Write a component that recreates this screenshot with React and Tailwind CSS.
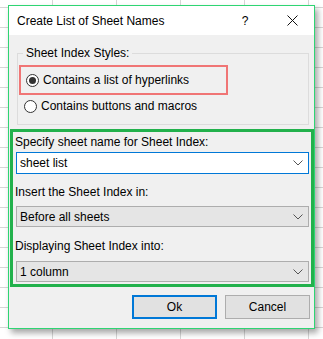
import { useState } from "react";

function Chevron() {
  return (
    <svg width="10" height="6" viewBox="0 0 10 6" className="shrink-0">
      <polyline points="0.5,0.5 5,5 9.5,0.5" fill="none" stroke="#555" strokeWidth="1" />
    </svg>
  );
}

function Radio({ checked }) {
  return (
    <span className="w-[13px] h-[13px] rounded-full border border-[#333] bg-white flex items-center justify-center shrink-0">
      {checked && <span className="w-[7px] h-[7px] rounded-full bg-[#333]" />}
    </span>
  );
}

function Select({ value }) {
  return (
    <div className="h-[21px] bg-[#e5e5e5] border border-[#adadad] flex items-center justify-between pl-[3px] pr-[5px]">
      <span>{value}</span>
      <Chevron />
    </div>
  );
}

export default function App() {
  const [name, setName] = useState("sheet list");
  const [style, setStyle] = useState("links");

  return (
    <div
      className="w-[323px] h-[339px] overflow-hidden bg-white pt-[5px] pl-[8px] text-[12px] text-black font-['Liberation_Sans',Arial,sans-serif] bg-[linear-gradient(to_right,#d6d6d6_1px,transparent_1px),linear-gradient(to_bottom,#d6d6d6_1px,transparent_1px)] [background-size:64px_20px] [background-position:52px_7px]"
    >
      <div className="w-[307px] h-[324px] border border-[#2ed573] bg-[#f0f0f0] flex flex-col shadow-[3px_4px_6px_rgba(0,0,0,0.35)]">
        {/* title bar */}
        <div className="h-[29px] bg-white flex items-center pl-[8px] shrink-0">
          <span className="flex-1">Create List of Sheet Names</span>
          <span className="w-[12px] text-center mr-[36px]">?</span>
          <svg width="11" height="11" viewBox="0 0 11 11" className="mr-[16px]">
            <path d="M0.5 0.5 L10.5 10.5 M10.5 0.5 L0.5 10.5" stroke="#111" strokeWidth="1" />
          </svg>
        </div>

        {/* group box */}
        <fieldset className="ml-[8px] mr-[5px] mt-[11px] border border-[#dcdcdc] h-[79px] pl-0 pr-0">
          <legend className="ml-[5px] px-[3px] leading-[14px]">Sheet Index Styles:</legend>
          <label
            className="mt-[5px] w-[209px] h-[30px] border-2 border-[#f07575] flex items-center gap-[4px] pl-[5px] ml-[1px]"
            onClick={() => setStyle("links")}
          >
            <Radio checked={style === "links"} />
            <span>Contains a list of hyperlinks</span>
          </label>
          <label className="mt-[2px] h-[18px] flex items-center gap-[4px] pl-[6px]" onClick={() => setStyle("macros")}>
            <Radio checked={style === "macros"} />
            <span>Contains buttons and macros</span>
          </label>
        </fieldset>

        {/* settings box */}
        <div className="mt-[4px] ml-[1px] mr-0 h-[158px] border-[3px] border-[#22b14c] px-[2px] flex flex-col">
          <div className="h-[20px] flex items-center">Specify sheet name for Sheet Index:</div>
          <div className="h-[22px] ml-[1px] bg-white border border-[#0078d7] flex items-center justify-between pl-[3px] pr-[5px]">
            <input
              value={name}
              onChange={(e) => setName(e.target.value)}
              className="flex-1 outline-none bg-transparent text-[12px]"
            />
            <Chevron />
          </div>
          <div className="h-[32px] flex items-center pt-[4px]">Insert the Sheet Index in:</div>
          <div className="ml-[1px]">
            <Select value="Before all sheets" />
          </div>
          <div className="h-[34px] flex items-center pt-[4px]">Displaying Sheet Index into:</div>
          <div className="ml-[1px]">
            <Select value="1 column" />
          </div>
        </div>

        {/* buttons */}
        <div className="mt-[8px] flex justify-end gap-[8px] pr-[4px]">
          <button className="w-[85px] h-[24px] bg-[#e1e1e1] border-2 border-[#0078d7]">Ok</button>
          <button className="w-[85px] h-[24px] bg-[#e1e1e1] border border-[#adadad]">Cancel</button>
        </div>
      </div>
    </div>
  );
}
